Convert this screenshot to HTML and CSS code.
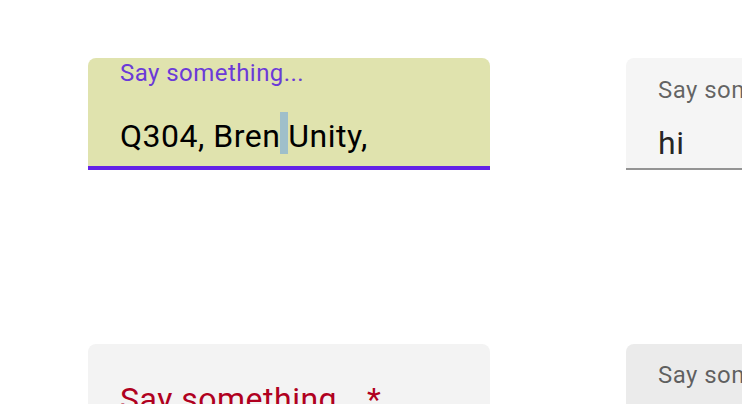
FILE: index.html
```html
<!DOCTYPE html>
<html lang="en">
<head>
<meta charset="utf-8">
<title>Text fields</title>
<link rel="stylesheet" href="styles.css">
</head>
<body>
<div class="grid">
  <div class="field field-focused">
    <div class="label label-focused">Say something...</div>
    <div class="value value-focused">Q304, Bren<span class="selection"></span>Unity,</div>
  </div>
  <div class="field field-filled">
    <div class="label">Say something...</div>
    <div class="value">hi</div>
  </div>
  <div class="field field-error">
    <div class="label-big">Say something...<span class="required">*</span></div>
  </div>
  <div class="field field-hover">
    <div class="label">Say something...</div>
  </div>
</div>
</body>
</html>
```
FILE: styles.css
```css
html, body {
  margin: 0;
  padding: 0;
  overflow: hidden;
  background: #ffffff;
  font-family: Roboto, "Liberation Sans", sans-serif;
}

.grid {
  display: grid;
  grid-template-columns: 402px 402px;
  column-gap: 136px;
  row-gap: 174px;
  padding: 58px 0 0 88px;
  width: 1200px;
}

.field {
  box-sizing: border-box;
  height: 112px;
  padding-left: 32px;
  border-radius: 8px 8px 0 0;
  background: #f5f5f5;
  white-space: nowrap;
}

.label {
  font-size: 24px;
  line-height: 24px;
  letter-spacing: 0.45px;
  color: rgba(0, 0, 0, 0.6);
}

.value {
  font-size: 32px;
  line-height: 32px;
  letter-spacing: 0.5px;
  color: rgba(0, 0, 0, 0.87);
}

/* focused field */
.field-focused {
  background: #e0e3ae;
  padding-top: 3px;
  border-bottom: 4px solid #6322e6;
}

.label-focused {
  color: #6b3ad8;
}

.value-focused {
  margin-top: 27px;
  line-height: 42px;
  color: #000000;
}

.selection {
  display: inline-block;
  width: 8px;
  height: 42px;
  vertical-align: -7px;
  background: #9fbfca;
}

/* filled field */
.field-filled {
  padding-top: 20px;
  border-bottom: 2px solid #949494;
}

.field-filled .value {
  margin-top: 25px;
}

/* error field */
.field-error {
  background: #f3f3f3;
  padding-top: 39px;
}

.label-big {
  font-size: 32px;
  line-height: 32px;
  letter-spacing: 0.5px;
  color: #b00020;
}

.required {
  margin-left: 3px;
}

/* hovered field */
.field-hover {
  background: #ebebeb;
  padding-top: 19px;
}
```
